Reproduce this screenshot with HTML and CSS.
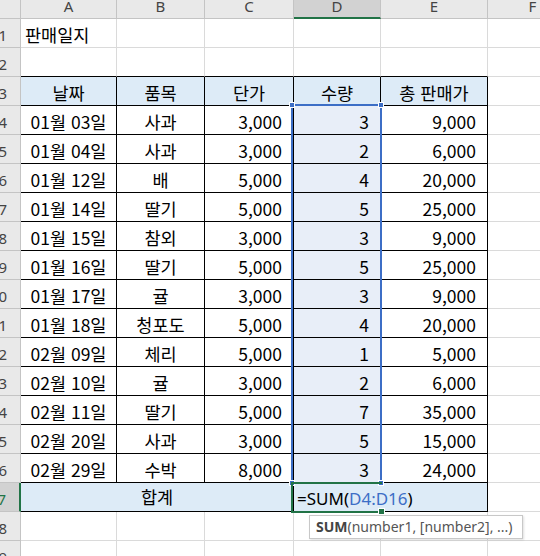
FILE: index.html
```html
<!DOCTYPE html>
<html lang="ko">

<head>
  <meta charset="UTF-8">
  <meta name="viewport" content="width=device-width, initial-scale=1.0">
  <title>판매일지</title>
  <link rel="stylesheet" href="styles.css">
</head>

<body>
  <div class="sheet">
    <div class="grid" id="grid">
      <!-- cells are generated below -->
    </div>

    <div class="range">
      <span class="knob tl"></span>
      <span class="knob tr"></span>
      <span class="knob bl"></span>
      <span class="knob br"></span>
    </div>
    <div class="active">
      <span class="fill-handle"></span>
    </div>
    <div class="tooltip"><b>SUM</b>(number1, [number2], ...)</div>
  </div>

  <script>
    // 판매 데이터
    const sales = [
      ['01월 03일', '사과', '3,000', '3', '9,000'],
      ['01월 04일', '사과', '3,000', '2', '6,000'],
      ['01월 12일', '배', '5,000', '4', '20,000'],
      ['01월 14일', '딸기', '5,000', '5', '25,000'],
      ['01월 15일', '참외', '3,000', '3', '9,000'],
      ['01월 16일', '딸기', '5,000', '5', '25,000'],
      ['01월 17일', '귤', '3,000', '3', '9,000'],
      ['01월 18일', '청포도', '5,000', '4', '20,000'],
      ['02월 09일', '체리', '5,000', '1', '5,000'],
      ['02월 10일', '귤', '3,000', '2', '6,000'],
      ['02월 11일', '딸기', '5,000', '7', '35,000'],
      ['02월 20일', '사과', '3,000', '5', '15,000'],
      ['02월 29일', '수박', '8,000', '3', '24,000']
    ];

    const grid = document.getElementById('grid');
    const letters = ['A', 'B', 'C', 'D', 'E', 'F'];

    function cell(text, classes) {
      const div = document.createElement('div');
      div.className = 'cell ' + (classes || '');
      if (text) div.innerHTML = text;
      grid.appendChild(div);
      return div;
    }

    // 열 머리글
    cell('', 'corner');
    letters.forEach(l => cell(l, 'col-head' + (l === 'D' ? ' picked' : '')));

    for (let r = 1; r <= 19; r++) {
      cell('<span>' + r + '</span>', 'row-head' + (r === 17 ? ' picked' : ''));

      if (r === 1) {
        cell('판매일지', 'title');
        for (let i = 0; i < 5; i++) cell('');
      } else if (r === 2) {
        for (let i = 0; i < 5; i++) cell('', 'above');
        cell('');
      } else if (r === 3) {
        ['날짜', '품목', '단가', '수량', '총 판매가'].forEach(h => cell(h, 'tb th'));
        cell('');
      } else if (r <= 16) {
        const row = sales[r - 4];
        cell(row[0], 'tb mid');
        cell(row[1], 'tb mid');
        cell(row[2], 'tb num');
        cell(row[3], 'tb num ref');
        cell(row[4], 'tb num');
        cell('');
      } else if (r === 17) {
        cell('합계', 'tb total mid merged');
        cell('=SUM(<em>D4:D16</em>)', 'tb total formula');
        cell('', 'tb total');
        cell('');
      } else {
        for (let i = 0; i < 6; i++) cell('');
      }
    }
  </script>
</body>

</html>
```

FILE: styles.css
```css
body {
  margin: 0;
  padding: 0;
  background-color: #fff;
  overflow: hidden;
}

.sheet {
  position: relative;
  width: 540px;
  height: 556px;
  overflow: hidden;
}

.grid {
  display: grid;
  grid-template-columns: 21px 96px 88px 89px 87px 107px 90px;
  grid-template-rows: 19px;
  grid-auto-rows: 29px;
  font-family: "Noto Sans CJK KR", "Noto Sans", sans-serif;
  font-size: 17.5px;
  color: #000;
}

.cell {
  box-sizing: border-box;
  display: flex;
  align-items: center;
  padding: 3px 4px 0;
  border-right: 1px solid #dadada;
  border-bottom: 1px solid #dadada;
  white-space: nowrap;
  overflow: hidden;
  line-height: 20px;
}

.corner,
.col-head,
.row-head {
  background-color: #e9e9e9;
  border-color: #c4c4c4;
  color: #444;
  font-family: "Noto Sans", sans-serif;
  font-size: 15px;
}

.col-head {
  justify-content: center;
  align-items: flex-start;
  padding: 0;
  line-height: 12px;
}

.row-head {
  justify-content: flex-end;
  padding: 3px 13px 0 0;
}

.col-head.picked {
  background-color: #d2d2d2;
  border-bottom: 2px solid #217346;
}

.row-head.picked {
  background-color: #d2d2d2;
  border-right: 2px solid #217346;
  color: #217346;
}

.above {
  border-bottom-color: #000;
}

.tb {
  border-right-color: #000;
  border-bottom-color: #000;
}

.th {
  background-color: #ddebf7;
  justify-content: center;
}

.mid {
  justify-content: center;
}

.num {
  justify-content: flex-end;
  padding-right: 11px;
}

.ref {
  background-color: #e8eef8;
}

.total {
  background-color: #ddebf7;
}

.merged {
  grid-column: span 3;
  padding-left: 4px;
  padding-bottom: 4px;
}

/* 수식은 옆 칸으로 넘쳐 보인다 */
.formula {
  position: relative;
  z-index: 1;
  overflow: visible;
  padding-left: 3px;
  border-right: 0;
  font-family: "Noto Sans", sans-serif;
  font-size: 17px;
}

.formula em {
  font-style: normal;
  color: #3c6ec6;
}

.range {
  position: absolute;
  left: 291px;
  top: 104px;
  width: 91px;
  height: 380px;
  box-sizing: border-box;
  border: 2px solid #3c6ec6;
  z-index: 2;
}

.knob {
  position: absolute;
  width: 6px;
  height: 6px;
  box-sizing: border-box;
  background-color: #3c6ec6;
  border: 1px solid #fff;
}

.knob.tl { left: -4px; top: -4px; }
.knob.tr { right: -4px; top: -4px; }
.knob.bl { left: -4px; bottom: -4px; }
.knob.br { right: -4px; bottom: -4px; }

.active {
  position: absolute;
  left: 291px;
  top: 482px;
  width: 91px;
  height: 31px;
  box-sizing: border-box;
  border: 2px solid #217346;
  border-right: 0;
  z-index: 3;
}

.fill-handle {
  position: absolute;
  right: -3px;
  bottom: -4px;
  width: 7px;
  height: 7px;
  box-sizing: border-box;
  background-color: #217346;
  border: 1px solid #fff;
}

.tooltip {
  position: absolute;
  left: 309px;
  top: 515px;
  width: 214px;
  height: 24px;
  box-sizing: border-box;
  padding-left: 6px;
  background-color: #fff;
  border: 1px solid #c8c8c8;
  box-shadow: 1px 1px 2px rgba(0, 0, 0, 0.12);
  font-family: "Noto Sans", sans-serif;
  font-size: 14px;
  line-height: 21px;
  color: #555;
  white-space: nowrap;
  z-index: 4;
}

.tooltip b {
  color: #444;
}
```
